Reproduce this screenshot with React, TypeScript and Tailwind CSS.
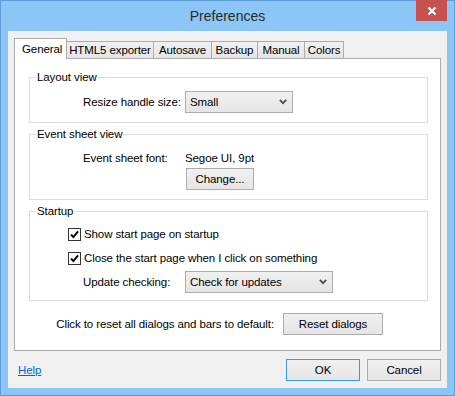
import type { ReactNode } from "react";

function Btn({ children, className = "", primary = false }: { children: ReactNode; className?: string; primary?: boolean }) {
  return (
    <button className={`flex h-[22px] items-center justify-center whitespace-nowrap border bg-linear-to-b from-[#f0f0f0] to-[#e5e5e5] text-black ${primary ? "border-[#3399ff]" : "border-[#acacac]"} ${className}`}>
      {children}
    </button>
  );
}

function Chevron() {
  return (
    <svg width="8" height="6" viewBox="0 0 8 6" className="text-[#4d4d4d]">
      <path d="M0.8 0.8 L4 4.2 L7.2 0.8" fill="none" stroke="currentColor" strokeWidth="1.7" />
    </svg>
  );
}

function Combo({ value, width }: { value: string; width: string }) {
  return (
    <div className={`flex h-[22px] shrink-0 items-center justify-between border border-[#acacac] bg-linear-to-b from-[#f0f0f0] to-[#e5e5e5] pl-[4px] pr-[5px] ${width}`}>
      <span>{value}</span>
      <Chevron />
    </div>
  );
}

function Check({ label }: { label: string }) {
  return (
    <div className="flex h-[22px] items-center gap-[3px] pl-[38px]">
      <span className="grid size-[13px] shrink-0 place-items-center border border-[#333] bg-white">
        <svg width="9" height="9" viewBox="0 0 9 9">
          <path d="M1 4.6 L3.4 7 L8 1.3" fill="none" stroke="#000" strokeWidth="1.9" />
        </svg>
      </span>
      <span>{label}</span>
    </div>
  );
}

function Group({ title, className = "", children }: { title: string; className?: string; children: ReactNode }) {
  return (
    <fieldset className={`border border-[#dcdcdc] ${className}`}>
      <legend className="ml-[6px] px-px leading-[16px]">{title}</legend>
      {children}
    </fieldset>
  );
}

const tabs = [
  { name: "HTML5 exporter", w: "w-[88px]" },
  { name: "Autosave", w: "w-[59px]" },
  { name: "Backup", w: "w-[47px]" },
  { name: "Manual", w: "w-[48px]" },
  { name: "Colors", w: "w-[40px]" },
];

export default function App() {
  return (
    <div className="flex h-[396px] w-[455px] flex-col whitespace-nowrap border border-[#5d9cd6] bg-[#8bc6f6] font-['Liberation_Sans',Arial,sans-serif] text-[11.5px] leading-[16px] tracking-[-0.1px] text-black">
      <div className="relative flex h-[30px] shrink-0 items-center justify-center">
        <span className="text-[14px] tracking-normal text-[#2b2b2b]">Preferences</span>
        <div className="absolute -top-px right-[7px] grid h-[21px] w-[31px] place-items-center bg-[#c75050]">
          <svg width="10" height="10" viewBox="0 0 10 10">
            <path d="M1.5 1.5 L8.5 8.5 M8.5 1.5 L1.5 8.5" stroke="#fff" strokeWidth="2.2" />
          </svg>
        </div>
      </div>

      <div className="mx-[7px] flex h-[357px] shrink-0 flex-col bg-[#f0f0f0] px-[6px] pt-[7px]">
        {/* tab strip */}
        <div className="relative z-10 flex h-[21px] items-end">
          <div className="flex h-[21px] w-[53px] items-start border-x border-t border-[#acacac] bg-white pl-[7px] pt-[2px]">General</div>
          {tabs.map((t) => (
            <div key={t.name} className={`-ml-px flex h-[18px] items-center justify-center border border-[#acacac] bg-linear-to-b from-[#f0f0f0] to-[#e5e5e5] ${t.w}`}>
              {t.name}
            </div>
          ))}
        </div>

        <div className="-mt-px flex flex-col border border-[#acacac] bg-white pb-[15px] pl-[14px] pr-[12px] pt-[10px]">
          <Group title="Layout view" className="pb-[9px] pt-[6px]">
            <div className="flex items-center pl-[53px]">
              <span className="w-[102px] shrink-0">Resize handle size:</span>
              <Combo value="Small" width="w-[108px]" />
            </div>
          </Group>

          <Group title="Event sheet view" className="mt-[3px] pb-[9px] pt-[8px]">
            <div className="flex h-[16px] items-center pl-[53px]">
              <span className="w-[102px] shrink-0">Event sheet font:</span>
              <span>Segoe UI, 9pt</span>
            </div>
            <div className="mt-[2px] pl-[156px]">
              <Btn className="w-[68px]">Change...</Btn>
            </div>
          </Group>

          <Group title="Startup" className="mt-[3px] flex flex-col gap-[2px] pb-[7px] pt-[4px]">
            <Check label="Show start page on startup" />
            <Check label="Close the start page when I click on something" />
            <div className="flex h-[22px] items-center pl-[53px]">
              <span className="w-[102px] shrink-0">Update checking:</span>
              <Combo value="Check for updates" width="w-[148px]" />
            </div>
          </Group>

          <div className="mt-[12px] flex items-center justify-end gap-[9px] pr-[45px]">
            <span>Click to reset all dialogs and bars to default:</span>
            <Btn className="w-[100px]">Reset dialogs</Btn>
          </div>
        </div>

        <div className="mt-[8px] flex items-center">
          <a href="#" className="ml-[4px] text-[#0066cc] underline">Help</a>
          <Btn primary className="ml-auto w-[74px]">OK</Btn>
          <Btn className="ml-[7px] w-[74px]">Cancel</Btn>
        </div>
      </div>
    </div>
  );
}
